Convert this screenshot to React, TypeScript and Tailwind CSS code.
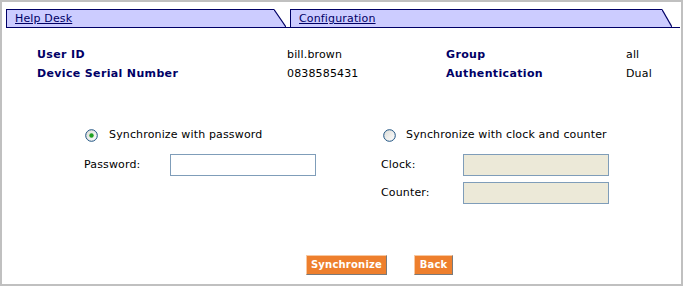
import React, { useState } from 'react';

const NAVY = '#000066';

// tab slant drawn on the right edge of each tab
const Slant: React.FC<{ w: number }> = ({ w }) => (
  <svg width={w} height={18} viewBox={`0 0 ${w} 18`} className="block shrink-0">
    <polygon points={`0,0 0,18 ${w},18`} fill="#ccccff" />
    <line x1={0} y1={0.5} x2={w} y2={18} stroke={NAVY} strokeWidth={1.2} />
  </svg>
);

const Radio: React.FC<{ checked: boolean; onClick: () => void }> = ({ checked, onClick }) => (
  <svg width={13} height={13} viewBox="0 0 13 13" className="block shrink-0 cursor-pointer" onClick={onClick}>
    <defs>
      <linearGradient id={checked ? 'rg1' : 'rg2'} x1="0" y1="0" x2="1" y2="1">
        <stop offset="0" stopColor="#dcdcd6" />
        <stop offset="1" stopColor="#ffffff" />
      </linearGradient>
    </defs>
    <circle cx={6.5} cy={6.5} r={5.8} fill={`url(#${checked ? 'rg1' : 'rg2'})`} stroke="#1c5180" strokeWidth={1} />
    {checked && <circle cx={6.5} cy={6.5} r={2.2} fill="#21a121" />}
  </svg>
);

const App: React.FC = () => {
  const [mode, setMode] = useState<'password' | 'clock'>('password');
  const [password, setPassword] = useState('');

  const label = 'font-bold text-[#000066] tracking-[0.35px]';
  const btn =
    'h-[20px] bg-[#ee7f2d] text-white font-bold text-[10px] tracking-[0.2px] border border-t-[#f8c8a0] border-l-[#f8c8a0] border-b-[#7a7a7a] border-r-[#7a7a7a] leading-none';

  return (
    <div
      className="w-[683px] h-[286px] border-2 border-[#c0c0c0] bg-white text-[11px] tracking-[0.15px] text-black overflow-hidden"
      style={{ fontFamily: '"DejaVu Sans", Verdana, sans-serif' }}
    >
      {/* tabs */}
      <div className="pt-[7px] pl-[4px] pr-[1px]">
        <div className="flex items-end border-b border-[#000066]">
          <div className="flex">
            <div className="w-[268px] h-[18px] border-t border-l border-[#000066] bg-[#ccccff] pl-[8px] leading-[17px]">
              <a href="#" className="underline text-[#000066]">Help Desk</a>
            </div>
            <Slant w={12} />
          </div>
          <div className="flex ml-[4px]">
            <div className="w-[372px] h-[18px] border-t border-l border-[#000066] bg-[#ccccff] pl-[8px] leading-[17px]">
              <a href="#" className="underline text-[#000066]">Configuration</a>
            </div>
            <Slant w={10} />
          </div>
        </div>
      </div>

      {/* user info */}
      <div className="mt-[17px] pl-[35px] grid grid-cols-[250px_159px_180px_1fr] leading-[19px]">
        <div className={label}>User ID</div>
        <div>bill.brown</div>
        <div className={label}>Group</div>
        <div>all</div>
        <div className={label}>Device Serial Number</div>
        <div>0838585431</div>
        <div className={label}>Authentication</div>
        <div>Dual</div>
      </div>

      {/* sync options */}
      <div className="mt-[42px] pl-[82px] flex">
        <div className="w-[297px]">
          <div className="h-[20px] flex items-center gap-[11px] pl-[1px]">
            <Radio checked={mode === 'password'} onClick={() => setMode('password')} />
            <span>Synchronize with password</span>
          </div>
          <div className="mt-[9px] flex items-center h-[22px]">
            <span className="w-[86px]">Password:</span>
            <input
              type="password"
              value={password}
              onChange={(e) => setPassword(e.target.value)}
              className="w-[146px] h-[22px] border border-[#7f9db9] bg-white outline-none px-1"
            />
          </div>
        </div>
        <div>
          <div className="h-[20px] flex items-center gap-[10px] pl-[2px]">
            <Radio checked={mode === 'clock'} onClick={() => setMode('clock')} />
            <span>Synchronize with clock and counter</span>
          </div>
          <div className="mt-[9px] flex items-center h-[22px]">
            <span className="w-[82px]">Clock:</span>
            <input disabled className="w-[146px] h-[22px] border border-[#7f9db9] bg-[#ece9d8]" />
          </div>
          <div className="mt-[6px] flex items-center h-[22px]">
            <span className="w-[82px]">Counter:</span>
            <input disabled className="w-[146px] h-[22px] border border-[#7f9db9] bg-[#ece9d8]" />
          </div>
        </div>
      </div>

      {/* buttons */}
      <div className="mt-[51px] pl-[304px] flex gap-[27px]">
        <button className={`w-[81px] ${btn}`}>Synchronize</button>
        <button className={`w-[39px] ${btn}`}>Back</button>
      </div>
    </div>
  );
};

export default App;
